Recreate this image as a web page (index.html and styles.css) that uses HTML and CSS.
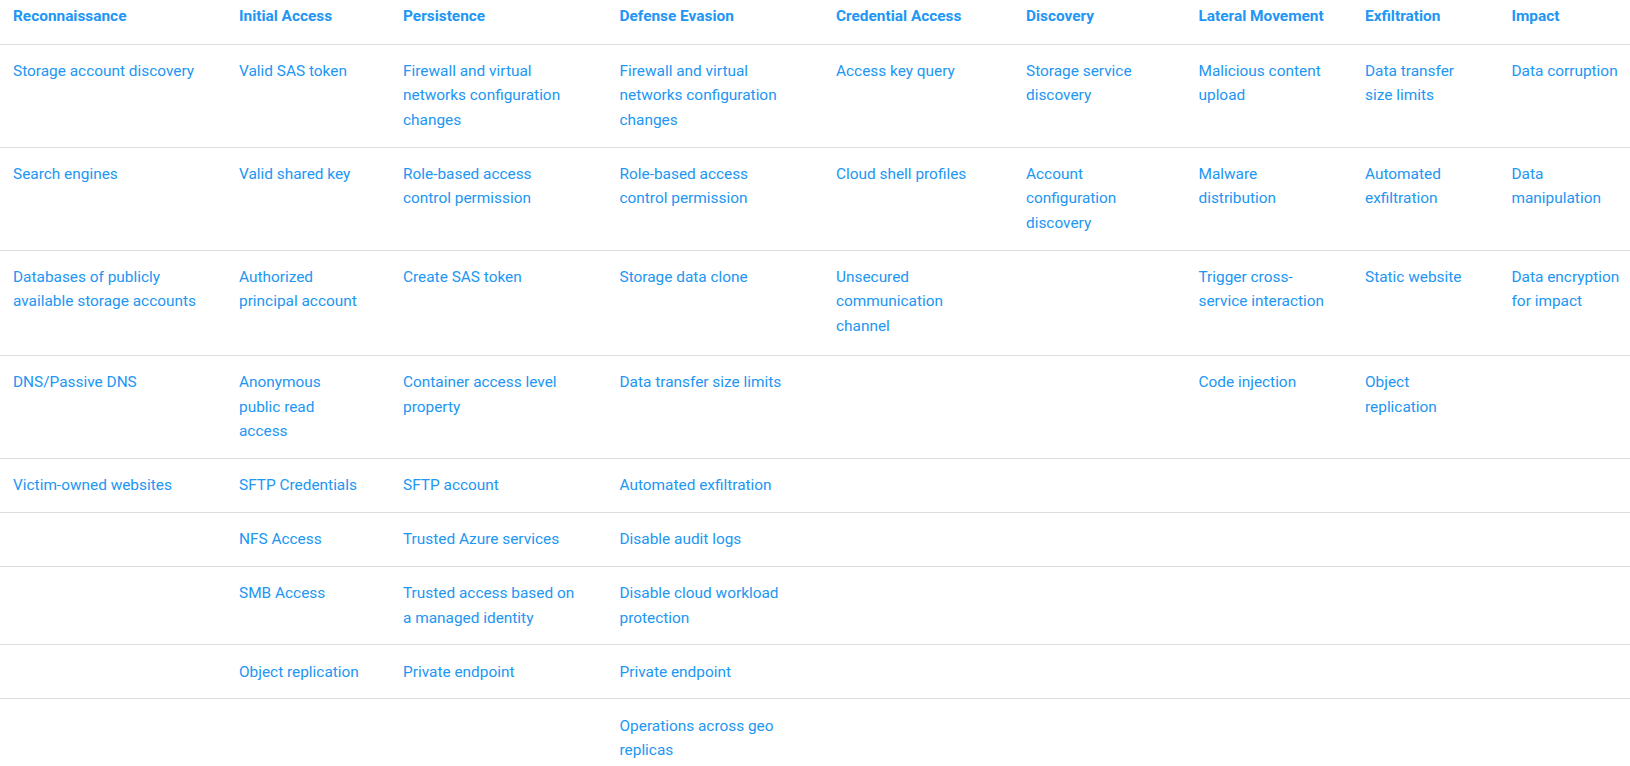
FILE: index.html
```html
<!DOCTYPE html>
<html lang="en">
<head>
<meta charset="utf-8">
<title>Azure Storage threat matrix</title>
<link rel="stylesheet" href="styles.css">
</head>
<body>
<div class="matrix-wrap">
<table class="matrix">
  <colgroup>
    <col class="c1"><col class="c2"><col class="c3"><col class="c4"><col class="c5"><col class="c6"><col class="c7"><col class="c8"><col class="c9">
  </colgroup>
  <thead>
    <tr>
      <th>Reconnaissance</th>
      <th>Initial Access</th>
      <th>Persistence</th>
      <th>Defense Evasion</th>
      <th>Credential Access</th>
      <th>Discovery</th>
      <th>Lateral Movement</th>
      <th>Exfiltration</th>
      <th>Impact</th>
    </tr>
  </thead>
  <tbody>
    <tr>
      <td>Storage account discovery</td>
      <td>Valid SAS token</td>
      <td>Firewall and virtual networks configuration changes</td>
      <td>Firewall and virtual networks configuration changes</td>
      <td>Access key query</td>
      <td>Storage service discovery</td>
      <td>Malicious content upload</td>
      <td>Data transfer size limits</td>
      <td>Data corruption</td>
    </tr>
    <tr>
      <td>Search engines</td>
      <td>Valid shared key</td>
      <td>Role-based access control permission</td>
      <td>Role-based access control permission</td>
      <td>Cloud shell profiles</td>
      <td>Account configuration discovery</td>
      <td>Malware distribution</td>
      <td>Automated exfiltration</td>
      <td>Data manipulation</td>
    </tr>
    <tr class="row-loose">
      <td>Databases of publicly available storage accounts</td>
      <td>Authorized principal account</td>
      <td>Create SAS token</td>
      <td>Storage data clone</td>
      <td>Unsecured communication channel</td>
      <td></td>
      <td>Trigger cross-service interaction</td>
      <td>Static website</td>
      <td>Data encryption for impact</td>
    </tr>
    <tr>
      <td>DNS/Passive DNS</td>
      <td>Anonymous public read access</td>
      <td>Container access level property</td>
      <td>Data transfer size limits</td>
      <td></td>
      <td></td>
      <td>Code injection</td>
      <td>Object replication</td>
      <td></td>
    </tr>
    <tr>
      <td>Victim-owned websites</td>
      <td>SFTP Credentials</td>
      <td>SFTP account</td>
      <td>Automated exfiltration</td>
      <td></td><td></td><td></td><td></td><td></td>
    </tr>
    <tr>
      <td></td>
      <td>NFS Access</td>
      <td>Trusted Azure services</td>
      <td>Disable audit logs</td>
      <td></td><td></td><td></td><td></td><td></td>
    </tr>
    <tr>
      <td></td>
      <td>SMB Access</td>
      <td>Trusted access based on a managed identity</td>
      <td>Disable cloud workload protection</td>
      <td></td><td></td><td></td><td></td><td></td>
    </tr>
    <tr>
      <td></td>
      <td>Object replication</td>
      <td>Private endpoint</td>
      <td>Private endpoint</td>
      <td></td><td></td><td></td><td></td><td></td>
    </tr>
    <tr>
      <td></td>
      <td></td>
      <td></td>
      <td>Operations across geo replicas</td>
      <td></td><td></td><td></td><td></td><td></td>
    </tr>
  </tbody>
</table>
</div>
</body>
</html>
```

FILE: styles.css
```css
html, body {
  margin: 0;
  padding: 0;
  background: #ffffff;
}

body {
  font-family: Roboto, "Noto Sans", Arial, sans-serif;
  font-size: 15.4px;
  line-height: 24.5px;
  color: #2196f3;
}

.matrix-wrap {
  width: 100%;
  overflow: hidden;
}

.matrix {
  width: 1653.5px;
  border-collapse: collapse;
  table-layout: fixed;
}

.c1 { width: 226px; }
.c2 { width: 164px; }
.c3 { width: 216.5px; }
.c4 { width: 216.5px; }
.c5 { width: 190px; }
.c6 { width: 172.5px; }
.c7 { width: 166.5px; }
.c8 { width: 146.5px; }
.c9 { width: 155px; }

.matrix th {
  text-align: left;
  font-weight: 700;
  color: #2196f3;
  white-space: nowrap;
  padding: 4px 27px 15px 13px;
  vertical-align: top;
  border-bottom: 1px solid #dddddd;
}

.matrix td {
  padding: 14.25px 27px 14.25px 13px;
  vertical-align: top;
  border-bottom: 1px solid #dddddd;
  color: #2196f3;
}

.matrix .row-loose td {
  padding-bottom: 16.5px;
}
```
